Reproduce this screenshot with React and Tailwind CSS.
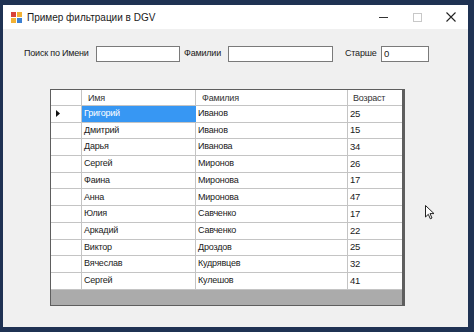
import { memo } from "react";

const rows = [
  ["Григорий", "Иванов", "25"],
  ["Дмитрий", "Иванов", "15"],
  ["Дарья", "Иванова", "34"],
  ["Сергей", "Миронов", "26"],
  ["Фаина", "Миронова", "17"],
  ["Анна", "Миронова", "47"],
  ["Юлия", "Савченко", "17"],
  ["Аркадий", "Савченко", "22"],
  ["Виктор", "Дроздов", "25"],
  ["Вячеслав", "Кудрявцев", "32"],
  ["Сергей", "Кулешов", "41"],
];

const FormIcon = () => (
  <svg width="11" height="11" viewBox="0 0 11 11">
    <rect x="0" y="0" width="5" height="5" fill="#d9423a" />
    <rect x="6" y="0" width="5" height="5" fill="#f2b134" />
    <rect x="0" y="6" width="5" height="5" fill="#f2b134" />
    <rect x="6" y="6" width="5" height="5" fill="#3b7fd1" />
  </svg>
);

const TitleBar = () => {
  return (
    <div className="flex items-center h-[24px] bg-white pl-[8px]">
      <FormIcon />
      <span className="ml-[5px] text-[10px] text-[#1a1a1a] whitespace-nowrap">
        Пример фильтрации в DGV
      </span>
      <div className="ml-auto flex items-center h-full">
        <div className="w-[34px] flex justify-center">
          <div className="w-[9px] h-px bg-[#333]" />
        </div>
        <div className="w-[34px] flex justify-center">
          <div className="w-[9px] h-[9px] border border-[#c8c8c8]" />
        </div>
        <div className="w-[34px] flex justify-center">
          <svg width="10" height="10" viewBox="0 0 10 10">
            <path d="M0.5 0.5L9.5 9.5M9.5 0.5L0.5 9.5" stroke="#222" strokeWidth="1.1" />
          </svg>
        </div>
      </div>
    </div>
  );
};

const SearchRow = () => {
  return (
    <div className="flex items-center h-[16px] pl-[21px] text-[9px] tracking-[-0.2px] text-[#1a1a1a] whitespace-nowrap">
      <span className="w-[72px]">Поиск по Имени</span>
      <div className="w-[84px] h-[16px] bg-white border border-[#7a7a7a]" />
      <span className="w-[48px] pl-[4px]">Фамилии</span>
      <div className="w-[105px] h-[16px] bg-white border border-[#7a7a7a]" />
      <span className="w-[36px] ml-[12px]">Старше</span>
      <div className="w-[48px] h-[16px] bg-white border border-[#7a7a7a] pl-[2px] leading-[14px] text-[9.5px]">
        0
      </div>
    </div>
  );
};

const Grid = () => {
  return (
    <div className="mt-[27px] ml-[47px] w-[355px] h-[217px] border-t border-l border-b border-r-[3px] border-[#5e5e5e] bg-[#ababab] text-[9px] tracking-[-0.2px] text-[#1a1a1a] whitespace-nowrap">
      <div className="grid grid-cols-[31px_114px_152px_54px] h-[16px] bg-white border-b border-[#c4c4c4]">
        <div className="border-r border-[#c4c4c4]" />
        <div className="border-r border-[#c4c4c4] pl-[6px] leading-[16px] text-[#333]">Имя</div>
        <div className="border-r border-[#c4c4c4] pl-[6px] leading-[16px] text-[#333]">Фамилия</div>
        <div className="pl-[5px] leading-[16px] text-[#333]">Возраст</div>
      </div>
      {rows.map((r, i) => (
        <div
          key={i}
          className="grid grid-cols-[31px_114px_152px_54px] h-[16.7px] bg-white border-b border-[#c4c4c4]"
        >
          <div className="border-r border-[#c4c4c4] flex items-center pl-[5px]">
            {i === 0 && (
              <svg width="4" height="7" viewBox="0 0 4 7">
                <path d="M0 0L4 3.5L0 7Z" fill="#111" />
              </svg>
            )}
          </div>
          <div
            className={
              i === 0
                ? "bg-[#3797f3] text-white pl-[2px] flex items-center"
                : "border-r border-[#c4c4c4] pl-[2px] flex items-center"
            }
          >
            {r[0]}
          </div>
          <div className="border-r border-[#c4c4c4] pl-[2px] flex items-center">{r[1]}</div>
          <div className="pl-[2px] flex items-center text-[9.5px]">{r[2]}</div>
        </div>
      ))}
    </div>
  );
};

const Cursor = () => (
  <svg className="absolute left-[425px] top-[205px]" width="10" height="15" viewBox="0 0 10 15">
    <path d="M0.5 0.5L0.5 12L3.3 9.3L5.3 13.8L7 13L5 8.6L9 8.6Z" fill="#fff" stroke="#222" strokeWidth="1" />
  </svg>
);

const App = () => {
  return (
    <div
      className="relative w-[474px] h-[332px] bg-[#1f3253] pt-[5px] pl-[3px]"
      style={{ fontFamily: '"Liberation Sans", Arial, sans-serif' }}
    >
      <div className="w-[465px] h-[322px] flex flex-col">
        <TitleBar />
        <div className="flex-1 bg-[#f0f0f0] pt-[17px]">
          <SearchRow />
          <Grid />
        </div>
      </div>
      <Cursor />
    </div>
  );
};

export default memo(App);
